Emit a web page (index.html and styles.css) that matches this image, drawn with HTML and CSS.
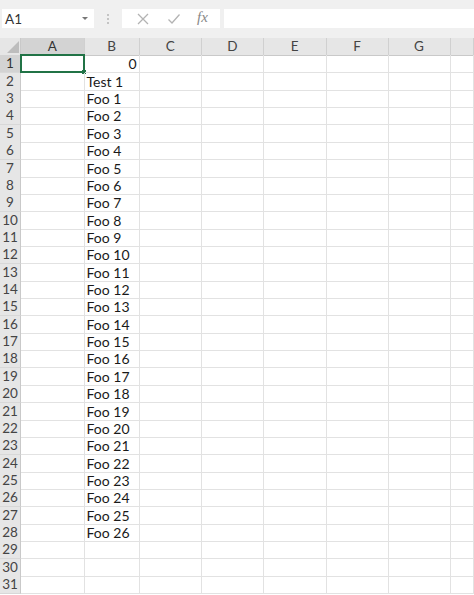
FILE: index.html
```html
<!DOCTYPE html>
<html>
<head>
<meta charset="utf-8">
<link rel="stylesheet" href="styles.css">
</head>
<body>
<div class="toolbar">
  <div class="namebox"><span class="ref">A1</span><span class="caret"></span></div>
  <div class="grip"><i></i><i></i><i></i></div>
  <div class="fbtns">
    <svg class="ico" width="14" height="14" viewBox="0 0 14 14"><path d="M2 2L12 12M12 2L2 12" stroke="#b3b3b3" stroke-width="1.3" fill="none"/></svg>
    <svg class="ico" width="14" height="14" viewBox="0 0 14 14"><path d="M1.5 7.5L5 11L12.5 2.5" stroke="#b3b3b3" stroke-width="1.3" fill="none"/></svg>
    <span class="fx">fx</span>
  </div>
  <div class="finput"></div>
</div>
<div class="sheet">
  <div class="row head"><div class="corner"><svg width="21" height="17" viewBox="0 0 21 17"><path d="M7 15H19V3Z" fill="#bdbdbd"/></svg></div><div class="ch sel">A</div><div class="ch">B</div><div class="ch">C</div><div class="ch">D</div><div class="ch">E</div><div class="ch">F</div><div class="ch">G</div><div class="ch"></div></div>
  <div class="row"><div class="rh sel">1</div><div class="c active"><span class="handle"></span></div><div class="c num">0</div><div class="c"></div><div class="c"></div><div class="c"></div><div class="c"></div><div class="c"></div><div class="c"></div></div>
  <div class="row"><div class="rh">2</div><div class="c"></div><div class="c">Test 1</div><div class="c"></div><div class="c"></div><div class="c"></div><div class="c"></div><div class="c"></div><div class="c"></div></div>
  <div class="row"><div class="rh">3</div><div class="c"></div><div class="c">Foo 1</div><div class="c"></div><div class="c"></div><div class="c"></div><div class="c"></div><div class="c"></div><div class="c"></div></div>
  <div class="row"><div class="rh">4</div><div class="c"></div><div class="c">Foo 2</div><div class="c"></div><div class="c"></div><div class="c"></div><div class="c"></div><div class="c"></div><div class="c"></div></div>
  <div class="row"><div class="rh">5</div><div class="c"></div><div class="c">Foo 3</div><div class="c"></div><div class="c"></div><div class="c"></div><div class="c"></div><div class="c"></div><div class="c"></div></div>
  <div class="row"><div class="rh">6</div><div class="c"></div><div class="c">Foo 4</div><div class="c"></div><div class="c"></div><div class="c"></div><div class="c"></div><div class="c"></div><div class="c"></div></div>
  <div class="row"><div class="rh">7</div><div class="c"></div><div class="c">Foo 5</div><div class="c"></div><div class="c"></div><div class="c"></div><div class="c"></div><div class="c"></div><div class="c"></div></div>
  <div class="row"><div class="rh">8</div><div class="c"></div><div class="c">Foo 6</div><div class="c"></div><div class="c"></div><div class="c"></div><div class="c"></div><div class="c"></div><div class="c"></div></div>
  <div class="row"><div class="rh">9</div><div class="c"></div><div class="c">Foo 7</div><div class="c"></div><div class="c"></div><div class="c"></div><div class="c"></div><div class="c"></div><div class="c"></div></div>
  <div class="row"><div class="rh">10</div><div class="c"></div><div class="c">Foo 8</div><div class="c"></div><div class="c"></div><div class="c"></div><div class="c"></div><div class="c"></div><div class="c"></div></div>
  <div class="row"><div class="rh">11</div><div class="c"></div><div class="c">Foo 9</div><div class="c"></div><div class="c"></div><div class="c"></div><div class="c"></div><div class="c"></div><div class="c"></div></div>
  <div class="row"><div class="rh">12</div><div class="c"></div><div class="c">Foo 10</div><div class="c"></div><div class="c"></div><div class="c"></div><div class="c"></div><div class="c"></div><div class="c"></div></div>
  <div class="row"><div class="rh">13</div><div class="c"></div><div class="c">Foo 11</div><div class="c"></div><div class="c"></div><div class="c"></div><div class="c"></div><div class="c"></div><div class="c"></div></div>
  <div class="row"><div class="rh">14</div><div class="c"></div><div class="c">Foo 12</div><div class="c"></div><div class="c"></div><div class="c"></div><div class="c"></div><div class="c"></div><div class="c"></div></div>
  <div class="row"><div class="rh">15</div><div class="c"></div><div class="c">Foo 13</div><div class="c"></div><div class="c"></div><div class="c"></div><div class="c"></div><div class="c"></div><div class="c"></div></div>
  <div class="row"><div class="rh">16</div><div class="c"></div><div class="c">Foo 14</div><div class="c"></div><div class="c"></div><div class="c"></div><div class="c"></div><div class="c"></div><div class="c"></div></div>
  <div class="row"><div class="rh">17</div><div class="c"></div><div class="c">Foo 15</div><div class="c"></div><div class="c"></div><div class="c"></div><div class="c"></div><div class="c"></div><div class="c"></div></div>
  <div class="row"><div class="rh">18</div><div class="c"></div><div class="c">Foo 16</div><div class="c"></div><div class="c"></div><div class="c"></div><div class="c"></div><div class="c"></div><div class="c"></div></div>
  <div class="row"><div class="rh">19</div><div class="c"></div><div class="c">Foo 17</div><div class="c"></div><div class="c"></div><div class="c"></div><div class="c"></div><div class="c"></div><div class="c"></div></div>
  <div class="row"><div class="rh">20</div><div class="c"></div><div class="c">Foo 18</div><div class="c"></div><div class="c"></div><div class="c"></div><div class="c"></div><div class="c"></div><div class="c"></div></div>
  <div class="row"><div class="rh">21</div><div class="c"></div><div class="c">Foo 19</div><div class="c"></div><div class="c"></div><div class="c"></div><div class="c"></div><div class="c"></div><div class="c"></div></div>
  <div class="row"><div class="rh">22</div><div class="c"></div><div class="c">Foo 20</div><div class="c"></div><div class="c"></div><div class="c"></div><div class="c"></div><div class="c"></div><div class="c"></div></div>
  <div class="row"><div class="rh">23</div><div class="c"></div><div class="c">Foo 21</div><div class="c"></div><div class="c"></div><div class="c"></div><div class="c"></div><div class="c"></div><div class="c"></div></div>
  <div class="row"><div class="rh">24</div><div class="c"></div><div class="c">Foo 22</div><div class="c"></div><div class="c"></div><div class="c"></div><div class="c"></div><div class="c"></div><div class="c"></div></div>
  <div class="row"><div class="rh">25</div><div class="c"></div><div class="c">Foo 23</div><div class="c"></div><div class="c"></div><div class="c"></div><div class="c"></div><div class="c"></div><div class="c"></div></div>
  <div class="row"><div class="rh">26</div><div class="c"></div><div class="c">Foo 24</div><div class="c"></div><div class="c"></div><div class="c"></div><div class="c"></div><div class="c"></div><div class="c"></div></div>
  <div class="row"><div class="rh">27</div><div class="c"></div><div class="c">Foo 25</div><div class="c"></div><div class="c"></div><div class="c"></div><div class="c"></div><div class="c"></div><div class="c"></div></div>
  <div class="row"><div class="rh">28</div><div class="c"></div><div class="c">Foo 26</div><div class="c"></div><div class="c"></div><div class="c"></div><div class="c"></div><div class="c"></div><div class="c"></div></div>
  <div class="row"><div class="rh">29</div><div class="c"></div><div class="c"></div><div class="c"></div><div class="c"></div><div class="c"></div><div class="c"></div><div class="c"></div><div class="c"></div></div>
  <div class="row"><div class="rh">30</div><div class="c"></div><div class="c"></div><div class="c"></div><div class="c"></div><div class="c"></div><div class="c"></div><div class="c"></div><div class="c"></div></div>
  <div class="row"><div class="rh">31</div><div class="c"></div><div class="c"></div><div class="c"></div><div class="c"></div><div class="c"></div><div class="c"></div><div class="c"></div><div class="c"></div></div>
</div>
</body>
</html>
```
FILE: styles.css
```css
* { box-sizing: border-box; }
html, body { margin: 0; padding: 0; background: #fff; }
body {
  font-family: Lato, "Open Sans", "Liberation Sans", sans-serif;
  font-size: 14px;
  color: #1a1a1a;
  overflow: hidden;
  width: 474px;
  height: 595px;
}
.toolbar {
  height: 38px;
  background: #f0f0f0;
  display: flex;
  align-items: flex-start;
  padding-top: 9px;
}
.namebox {
  margin-left: 2px;
  width: 92px;
  height: 19px;
  background: #fff;
  display: flex;
  align-items: center;
  justify-content: space-between;
  padding: 0 6px 0 3px;
  font-size: 13.5px;
  color: #333;
}
.caret {
  width: 0; height: 0;
  border-left: 3.5px solid transparent;
  border-right: 3.5px solid transparent;
  border-top: 3.5px solid #777;
}
.grip {
  width: 28px;
  height: 19px;
  display: flex;
  flex-direction: column;
  align-items: center;
  justify-content: center;
  gap: 2px;
}
.grip i {
  display: block;
  width: 2px; height: 2px;
  background: #c4c4c4;
}
.fbtns {
  width: 98px;
  height: 19px;
  background: #fff;
  display: flex;
  align-items: center;
  justify-content: space-around;
  padding: 0 4px 0 6px;
}
.fx {
  font-family: "Liberation Serif", serif;
  font-style: italic;
  font-size: 15px;
  color: #888;
  margin-top: -2px;
}
.finput {
  margin-left: 4px;
  flex: 1;
  height: 19px;
  background: #fff;
}
.sheet { display: flex; flex-direction: column; }
.row {
  display: grid;
  grid-template-columns: 21px 63.5px 55px 62.5px 62px 62.5px 62px 62px 1fr;
  height: 17.37px;
}
.c {
  border-right: 1px solid #e2e2e2;
  border-bottom: 1px solid #e2e2e2;
  padding: 0 2px;
  line-height: 17px;
  white-space: nowrap;
  position: relative;
}
.c.num { text-align: right; }
.c.active {
  border: 2px solid #217346;
  margin-top: -1px;
  margin-left: -1px;
}
.handle {
  position: absolute;
  right: -3px;
  bottom: -3px;
  width: 4px; height: 4px;
  background: #217346;
}
.rh {
  background: #e6e6e6;
  border-right: 1px solid #c9c9c9;
  border-bottom: 1px solid #d8d8d8;
  text-align: center;
  line-height: 17px;
  color: #444;
  font-size: 13.5px;
}
.rh.sel { background: #d3d3d3; color: #333; }
.head { background: #e6e6e6; }
.corner { background: #e6e6e6; border-right: 1px solid #c9c9c9; border-bottom: 1px solid #c9c9c9; }
.corner svg { display: block; }
.ch {
  background: #e6e6e6;
  border-right: 1px solid #d0d0d0;
  border-bottom: 1px solid #c9c9c9;
  text-align: center;
  line-height: 17px;
  color: #444;
  font-size: 13.5px;
}
.ch.sel { background: #d3d3d3; color: #333; }
```
